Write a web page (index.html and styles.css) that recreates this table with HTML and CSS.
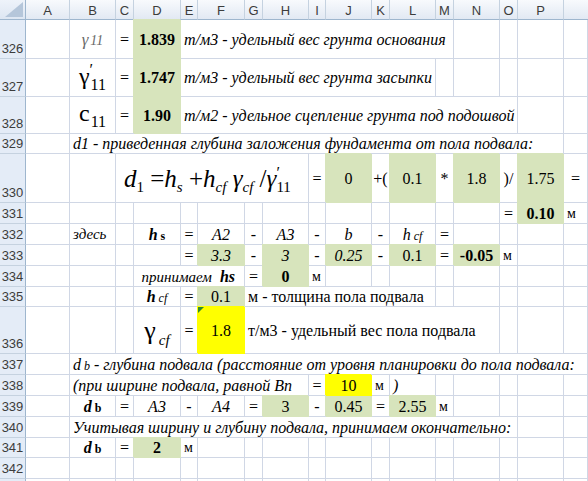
FILE: index.html
```html
<!DOCTYPE html>
<html>
<head>
<meta charset="utf-8">
<link rel="stylesheet" href="styles.css">
</head>
<body>
<div class="sheet">
  <div class="corner"><span class="tri"></span></div>
  <div class="ch"><span class="hv">A</span></div><div class="ch"><span class="hv">B</span></div><div class="ch"><span class="hv">C</span></div><div class="ch"><span class="hv">D</span></div><div class="ch"><span class="hv">E</span></div><div class="ch"><span class="hv">F</span></div><div class="ch"><span class="hv">G</span></div><div class="ch"><span class="hv">H</span></div><div class="ch"><span class="hv">I</span></div><div class="ch"><span class="hv">J</span></div><div class="ch"><span class="hv">K</span></div><div class="ch"><span class="hv">L</span></div><div class="ch"><span class="hv">M</span></div><div class="ch"><span class="hv">N</span></div><div class="ch"><span class="hv">O</span></div><div class="ch"><span class="hv">P</span></div><div class="ch last"></div>

  <div class="rh"><span class="hv">326</span></div>
  <div class="c"></div>
  <div class="c"><span class="v g11">γ<i class="v">11</i></span></div>
  <div class="c"><span class="v">=</span></div>
  <div class="c g"><span class="v b">1.839</span></div>
  <div class="c s9 txt"><span class="v it">т/м3 - удельный вес грунта основания</span></div>
  <div class="c"></div><div class="c"></div><div class="c"></div><div class="c"></div>

  <div class="rh"><span class="hv">327</span></div>
  <div class="c"></div>
  <div class="c"><span class="v bigsym">γ<span class="v pr">′</span><span class="v sb">11</span></span></div>
  <div class="c"><span class="v">=</span></div>
  <div class="c g"><span class="v b">1.747</span></div>
  <div class="c s8 txt"><span class="v it">т/м3 - удельный вес грунта засыпки</span></div>
  <div class="c"></div><div class="c"></div><div class="c"></div><div class="c"></div><div class="c"></div>

  <div class="rh"><span class="hv">328</span></div>
  <div class="c"></div>
  <div class="c"><span class="v bigsym">c<span class="v sb">11</span></span></div>
  <div class="c"><span class="v">=</span></div>
  <div class="c g"><span class="v b">1.90</span></div>
  <div class="c s11 txt"><span class="v it">т/м2 - удельное сцепление грунта под подошвой</span></div>
  <div class="c"></div><div class="c"></div>

  <div class="rh"><span class="hv">329</span></div>
  <div class="c"></div>
  <div class="c s15 txt"><span class="v it">d1 - приведенная глубина заложения фундамента от пола подвала:</span></div>
  <div class="c"></div>

  <div class="rh"><span class="hv">330</span></div>
  <div class="c"></div>
  <div class="c"></div>
  <div class="c s6 fxcell"><span class="v fx"><i class="v">d</i><span class="v fs">1</span> =<i class="v">h</i><span class="v fs"><i class="v">s</i></span> +<i class="v">h</i><span class="v fs"><i class="v">cf</i></span> <i class="v">γ</i><span class="v fs"><i class="v">cf</i></span> /<i class="v">γ</i><span class="v fp">′</span><span class="v fs">11</span></span></div>
  <div class="c"><span class="v">=</span></div>
  <div class="c g"><span class="v">0</span></div>
  <div class="c"><span class="v">+(</span></div>
  <div class="c g"><span class="v">0.1</span></div>
  <div class="c"><span class="v">*</span></div>
  <div class="c g"><span class="v">1.8</span></div>
  <div class="c"><span class="v">)/</span></div>
  <div class="c g"><span class="v">1.75</span></div>
  <div class="c"><span class="v">=</span></div>

  <div class="rh"><span class="hv">331</span></div>
  <div class="c"></div><div class="c"></div><div class="c"></div><div class="c"></div><div class="c"></div><div class="c"></div><div class="c"></div><div class="c"></div><div class="c"></div><div class="c"></div><div class="c"></div><div class="c"></div><div class="c"></div><div class="c"></div>
  <div class="c"><span class="v">=</span></div>
  <div class="c g"><span class="v b">0.10</span></div>
  <div class="c unit"><span class="v">м</span></div>

  <div class="rh"><span class="hv">332</span></div>
  <div class="c"></div>
  <div class="c txt"><span class="v it sm">здесь</span></div>
  <div class="c"></div>
  <div class="c"><span class="v"><b class="v"><i class="v">h</i></b><span class="v sx b">&nbsp;s</span></span></div>
  <div class="c"><span class="v">=</span></div>
  <div class="c"><span class="v it">A2</span></div>
  <div class="c"><span class="v">-</span></div>
  <div class="c"><span class="v it">A3</span></div>
  <div class="c"><span class="v">-</span></div>
  <div class="c"><span class="v it">b</span></div>
  <div class="c"><span class="v">-</span></div>
  <div class="c"><span class="v it">h<span class="v sx">&nbsp;cf</span></span></div>
  <div class="c"><span class="v">=</span></div>
  <div class="c"></div><div class="c"></div><div class="c"></div><div class="c"></div>

  <div class="rh"><span class="hv">333</span></div>
  <div class="c"></div><div class="c"></div><div class="c"></div><div class="c"></div>
  <div class="c"><span class="v">=</span></div>
  <div class="c g"><span class="v it">3.3</span></div>
  <div class="c"><span class="v">-</span></div>
  <div class="c g"><span class="v it">3</span></div>
  <div class="c"><span class="v">-</span></div>
  <div class="c g"><span class="v it">0.25</span></div>
  <div class="c"><span class="v">-</span></div>
  <div class="c g"><span class="v">0.1</span></div>
  <div class="c"><span class="v">=</span></div>
  <div class="c g"><span class="v b">-0.05</span></div>
  <div class="c unit"><span class="v">м</span></div>
  <div class="c"></div><div class="c"></div>

  <div class="rh"><span class="hv">334</span></div>
  <div class="c"></div><div class="c"></div><div class="c"></div>
  <div class="c s3 rt"><span class="v"><i class="v sm">принимаем</i>&nbsp;&nbsp;<b class="v"><i class="v">hs</i></b></span></div>
  <div class="c"><span class="v">=</span></div>
  <div class="c g"><span class="v b">0</span></div>
  <div class="c unit"><span class="v">м</span></div>
  <div class="c"></div><div class="c"></div><div class="c"></div><div class="c"></div><div class="c"></div><div class="c"></div><div class="c"></div><div class="c"></div>

  <div class="rh"><span class="hv">335</span></div>
  <div class="c"></div><div class="c"></div><div class="c"></div>
  <div class="c"><span class="v"><b class="v"><i class="v">h</i></b><span class="v sx it">&nbsp;cf</span></span></div>
  <div class="c"><span class="v">=</span></div>
  <div class="c g"><span class="v">0.1</span></div>
  <div class="c s6 txt"><span class="v">м - толщина пола подвала</span></div>
  <div class="c"></div><div class="c"></div><div class="c"></div><div class="c"></div><div class="c"></div>

  <div class="rh"><span class="hv">336</span></div>
  <div class="c"></div><div class="c"></div><div class="c"></div>
  <div class="c"><span class="v gcf">γ<span class="v sx2">cf</span></span></div>
  <div class="c"><span class="v">=</span></div>
  <div class="c y"><span class="flag"></span><span class="v">1.8</span></div>
  <div class="c s8 txt"><span class="v">т/м3 - удельный вес пола подвала</span></div>
  <div class="c"></div><div class="c"></div><div class="c"></div>

  <div class="rh"><span class="hv">337</span></div>
  <div class="c"></div>
  <div class="c s16 txt"><span class="v it">d<span class="v sx">&nbsp;b</span> - глубина подвала (расстояние от уровня планировки до пола подвала:</span></div>

  <div class="rh"><span class="hv">338</span></div>
  <div class="c"></div>
  <div class="c s7 txt"><span class="v it">(при ширине подвала, равной Вп</span></div>
  <div class="c"><span class="v">=</span></div>
  <div class="c y"><span class="v">10</span></div>
  <div class="c unit"><span class="v">м</span></div>
  <div class="c txt"><span class="v it">)</span></div>
  <div class="c"></div><div class="c"></div><div class="c"></div><div class="c"></div><div class="c"></div>

  <div class="rh"><span class="hv">339</span></div>
  <div class="c"></div>
  <div class="c"><span class="v"><b class="v"><i class="v">d</i></b><span class="v sx b">&nbsp;b</span></span></div>
  <div class="c"><span class="v">=</span></div>
  <div class="c"><span class="v it">A3</span></div>
  <div class="c"><span class="v">-</span></div>
  <div class="c"><span class="v it">A4</span></div>
  <div class="c"><span class="v">=</span></div>
  <div class="c g"><span class="v">3</span></div>
  <div class="c"><span class="v">-</span></div>
  <div class="c g"><span class="v">0.45</span></div>
  <div class="c"><span class="v">=</span></div>
  <div class="c g"><span class="v">2.55</span></div>
  <div class="c unit"><span class="v">м</span></div>
  <div class="c"></div><div class="c"></div><div class="c"></div><div class="c"></div>

  <div class="rh"><span class="hv">340</span></div>
  <div class="c"></div>
  <div class="c s14 txt"><span class="v it">Учитывая ширину и глубину подвала, принимаем окончательно:</span></div>
  <div class="c"></div><div class="c"></div>

  <div class="rh"><span class="hv">341</span></div>
  <div class="c"></div>
  <div class="c"><span class="v"><b class="v"><i class="v">d</i></b><span class="v sx b">&nbsp;b</span></span></div>
  <div class="c"><span class="v">=</span></div>
  <div class="c g"><span class="v b">2</span></div>
  <div class="c unit"><span class="v">м</span></div>
  <div class="c"></div><div class="c"></div><div class="c"></div><div class="c"></div><div class="c"></div><div class="c"></div><div class="c"></div><div class="c"></div><div class="c"></div><div class="c"></div><div class="c"></div><div class="c"></div>

  <div class="rh"><span class="hv">342</span></div>
  <div class="c"></div><div class="c"></div><div class="c"></div><div class="c"></div><div class="c"></div><div class="c"></div><div class="c"></div><div class="c"></div><div class="c"></div><div class="c"></div><div class="c"></div><div class="c"></div><div class="c"></div><div class="c"></div><div class="c"></div><div class="c"></div><div class="c"></div>

  <div class="rh"></div>
  <div class="c"></div><div class="c"></div><div class="c"></div><div class="c"></div><div class="c"></div><div class="c"></div><div class="c"></div><div class="c"></div><div class="c"></div><div class="c"></div><div class="c"></div><div class="c"></div><div class="c"></div><div class="c"></div><div class="c"></div><div class="c"></div><div class="c"></div>
</div>
</body>
</html>
```

FILE: styles.css
```css
body {
  margin: 0;
  background: #ffffff;
  font-family: "Liberation Serif";
}

.sheet {
  display: grid;
  grid-template-columns: 26px 44px 46px 18px 47px 17px 47px 18px 46px 17px 46px 18px 46px 18px 46px 18px 46px 24px;
  grid-template-rows: 20px 39px 38px 37px 20px 49px 21px 21px 21px 21px 20px 47px 21px 21px 21px 21px 20px 21px 21px;
  width: 588px;
  font-family: "Liberation Serif";
  font-size: 16px;
  color: #000;
}

.v {
  font-family: "Liberation Serif";
  flex-shrink: 0;
}

.corner {
  position: relative;
  background: linear-gradient(#eef3fa, #dde6f2);
  border-right: 1px solid #9eb6ce;
  border-bottom: 1px solid #9eb6ce;
  box-sizing: border-box;
}
.tri {
  position: absolute;
  right: 2px;
  bottom: 2px;
  width: 0;
  height: 0;
  border-left: 18px solid transparent;
  border-bottom: 15px solid #b5c6da;
}

.hv {
  font-family: "Liberation Sans";
  font-size: 13px;
  color: #3c3c3c;
}

.ch {
  background: linear-gradient(#f8fafd, #e2e9f3);
  border-right: 1px solid #c5d2e0;
  border-bottom: 1px solid #9eb6ce;
  box-sizing: border-box;
  display: flex;
  align-items: center;
  justify-content: center;
  padding-top: 1px;
}
.ch.last { border-right: none; }

.rh {
  background: #e4ecf7;
  border-right: 1px solid #9eb6ce;
  border-bottom: 1px solid #c5d2e0;
  box-sizing: border-box;
  display: flex;
  align-items: flex-end;
  justify-content: center;
  padding-bottom: 2px;
}

.c {
  font-family: "Liberation Serif";
  border-right: 1px solid #d0d7e5;
  border-bottom: 1px solid #d0d7e5;
  box-sizing: border-box;
  display: flex;
  align-items: center;
  justify-content: center;
  min-width: 0;
  padding-top: 1px;
}

.s3 { grid-column: span 3; }
.s6 { grid-column: span 6; }
.s7 { grid-column: span 7; }
.s8 { grid-column: span 8; }
.s9 { grid-column: span 9; }
.s11 { grid-column: span 11; }
.s14 { grid-column: span 14; }
.s15 { grid-column: span 15; }
.s16 { grid-column: span 16; }

.txt { justify-content: flex-start; padding-left: 3px; }
.rt { justify-content: flex-end; padding-right: 9px; }
.it { font-style: italic; }
.b { font-weight: bold; }
.sm { font-size: 15px; }
.unit { justify-content: flex-start; padding-left: 3px; }
.unit .v { font-size: 14px; }

.g {
  background: #d7e4bc;
  border-color: #d7e4bc;
  box-shadow: -1px -1px 0 #d7e4bc;
}
.y {
  position: relative;
  background: #ffff00;
  border-color: #ffff00;
  box-shadow: -1px -1px 0 #ffff00;
}
.flag {
  position: absolute;
  left: 0;
  top: 0;
  width: 0;
  height: 0;
  border-top: 6px solid #2f8a2f;
  border-right: 6px solid transparent;
}

.sx { font-size: 12px; }
.sx2 { font-size: 15px; font-style: italic; position: relative; top: 6px; margin-left: 3px; }

.g11 { color: #6a6a6a; font-size: 17px; font-style: italic; }
.g11 i { font-size: 14px; margin-left: 2px; }

.bigsym {
  font-size: 24px;
  position: relative;
  top: -2px;
}
.pr {
  display: inline-block;
  width: 0;
  font-size: 16px;
  position: relative;
  top: -9px;
}
.sb {
  font-size: 16px;
  position: relative;
  top: 6px;
  margin-left: 1px;
}

.gcf { font-size: 26px; }

.fxcell { justify-content: flex-start; padding-left: 8px; }
.fx { font-size: 25px; }
.fs { font-size: 15px; position: relative; top: 5px; }
.fp {
  display: inline-block;
  width: 0;
  font-size: 16px;
  position: relative;
  top: -9px;
}
```
